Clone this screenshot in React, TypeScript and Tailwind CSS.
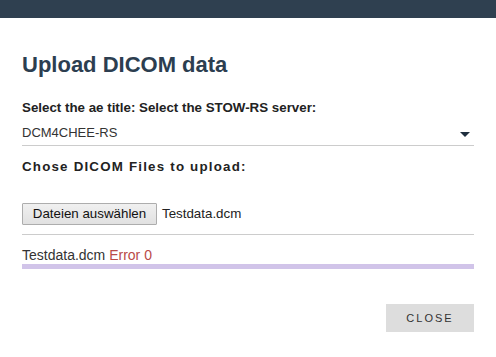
import React from "react";

export default function App() {
  return (
    <div className="w-[496px] h-[357px] bg-white overflow-hidden" style={{ fontFamily: '"Liberation Sans", Arial, sans-serif' }}>
      <div className="h-[18px] bg-[#2f4050]" />
      <div className="px-[22px]">
        <h2 className="mt-[34px] text-[22px] leading-[26px] font-bold text-[#2c3e50]">Upload DICOM data</h2>
        <div className="mt-[22px] text-[13.33px] leading-[16px] font-bold text-[#222]">
          Select the ae title: Select the STOW-RS server:
        </div>
        <div className="mt-[6px] flex items-center justify-between h-[24px] border-b border-[#cccccc] pb-[2px]">
          <span className="text-[13px] text-[#333]">DCM4CHEE-RS</span>
          <svg width="10" height="5" viewBox="0 0 10 5" className="mr-[4px] mt-[4px]">
            <path d="M0 0 L10 0 L5 5 Z" fill="#1f2f3f" />
          </svg>
        </div>
        <div className="mt-[13px] text-[13.33px] leading-[16px] font-bold text-[#222] tracking-[1.2px]">Chose DICOM Files to upload:</div>
        <div className="mt-[28px] flex items-center gap-[5px] pb-[9px] border-b border-[#cccccc]">
          <div className="h-[22px] w-[135px] flex items-center justify-center border border-[#adadad] bg-gradient-to-b from-[#f0f0f0] to-[#e1e1e1] text-[13.33px] text-[#111] rounded-[1px]">
            Dateien auswählen
          </div>
          <span className="text-[13.33px] text-[#222]">Testdata.dcm</span>
        </div>
        <div className="mt-[11px] text-[14px] leading-[18px] text-[#333]">
          Testdata.dcm <span className="text-[#b94a48]">Error 0</span>
        </div>
        <div className="h-[5px] bg-[#d1c4e9]" />
        <div className="mt-[35px] flex justify-end">
          <div className="w-[88px] h-[28px] bg-[#dddddd] flex items-center justify-center text-[11px] tracking-[2px] text-[#333]">
            CLOSE
          </div>
        </div>
      </div>
    </div>
  );
}
